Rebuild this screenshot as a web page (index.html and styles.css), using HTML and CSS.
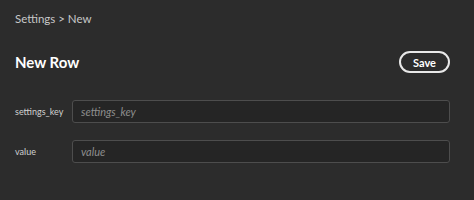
FILE: index.html
```html
<!DOCTYPE html>
<html>
<head>
<meta charset="utf-8">
<link rel="stylesheet" href="styles.css">
</head>
<body>
<div class="page">
  <nav class="crumbs">Settings &gt; New</nav>
  <header class="head">
    <h1 class="title">New Row</h1>
    <button class="save">Save</button>
  </header>
  <form class="form">
    <div class="row">
      <label class="label">settings_key</label>
      <input class="field" placeholder="settings_key">
    </div>
    <div class="row">
      <label class="label">value</label>
      <input class="field" placeholder="value">
    </div>
  </form>
</div>
</body>
</html>
```
FILE: styles.css
```css
html, body {
  margin: 0;
  background: #2c2c2c;
  height: 100%;
}
body {
  font-family: Lato, "Open Sans", sans-serif;
  color: #e6e6e6;
}
.page {
  padding: 12px 24px 0 15px;
}
.crumbs {
  font-size: 11.5px;
  line-height: 14px;
  color: #c8c8c8;
}
.head {
  display: flex;
  align-items: center;
  justify-content: space-between;
  margin-top: 25px;
  height: 22px;
}
.title {
  margin: 0;
  font-size: 15px;
  font-weight: 700;
  color: #ffffff;
}
.save {
  width: 51px;
  height: 22px;
  border: 2px solid #e8e8e8;
  border-radius: 11px;
  background: transparent;
  color: #ffffff;
  font-family: inherit;
  font-size: 11px;
  font-weight: 700;
  padding: 0;
}
.form {
  margin-top: 27px;
  display: flex;
  flex-direction: column;
  gap: 17px;
}
.row {
  display: flex;
  align-items: center;
}
.label {
  width: 57px;
  flex: none;
  font-size: 9px;
  color: #d0d0d0;
}
.field {
  flex: 1;
  height: 23px;
  box-sizing: border-box;
  background: #252525;
  border: 1px solid #4d4d4d;
  border-radius: 3px;
  padding: 0 8px;
  font-family: inherit;
  font-size: 11px;
  font-style: italic;
  color: #e0e0e0;
  outline: none;
}
.field::placeholder {
  color: #8e8e8e;
}
```
